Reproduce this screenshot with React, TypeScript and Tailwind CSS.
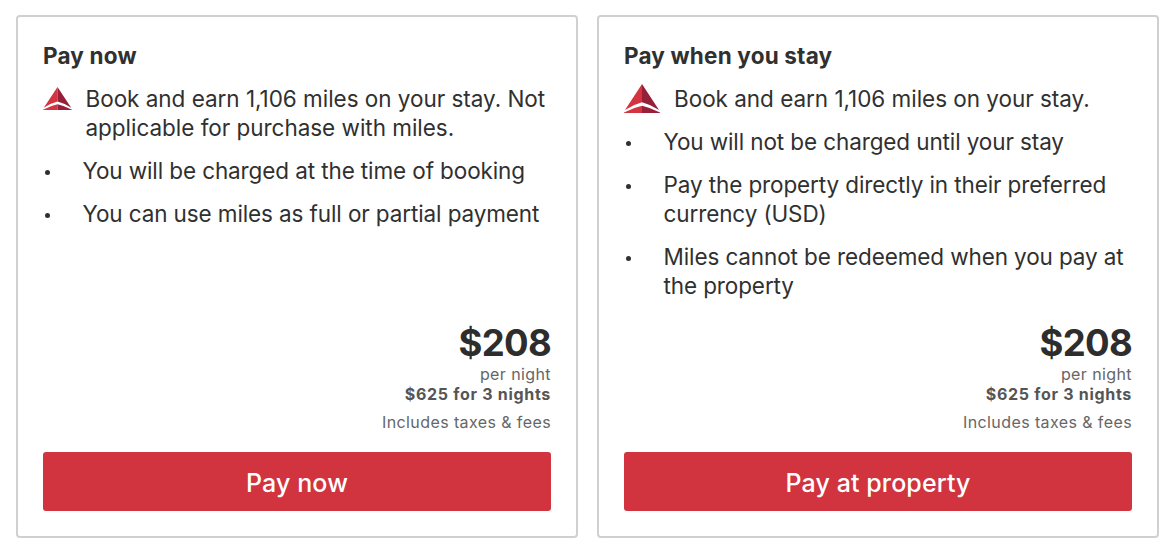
import clsx from 'clsx'

interface Offer {
  title: string
  miles: string[]
  largeLogo: boolean
  points: string[][]
  action: string
}

const offers: Offer[] = [
  {
    title: 'Pay now',
    miles: ['Book and earn 1,106 miles on your stay. Not', 'applicable for purchase with miles.'],
    largeLogo: false,
    points: [
      ['You will be charged at the time of booking'],
      ['You can use miles as full or partial payment'],
    ],
    action: 'Pay now',
  },
  {
    title: 'Pay when you stay',
    miles: ['Book and earn 1,106 miles on your stay.'],
    largeLogo: true,
    points: [
      ['You will not be charged until your stay'],
      ['Pay the property directly in their preferred', 'currency (USD)'],
      ['Miles cannot be redeemed when you pay at', 'the property'],
    ],
    action: 'Pay at property',
  },
]

function DeltaLogo({ className }: { className: string }) {
  return (
    <svg viewBox="0 0 36 30" preserveAspectRatio="none" className={className} aria-hidden="true">
      <path d="M18 0 L18 18.6 Q9 21 1 26.4 Z" fill="#d3343f" />
      <path d="M18 0 L35 26.4 Q27 21 18 18.6 Z" fill="#96203a" />
      <path d="M18 22 L18 30 L0 30 L0 29 Q9 24 18 22 Z" fill="#d3343f" />
      <path d="M18 22 Q27 24 36 29 L36 30 L18 30 Z" fill="#96203a" />
    </svg>
  )
}

function Lines({ lines }: { lines: string[] }) {
  return (
    <p className="whitespace-nowrap">
      {lines.map((line) => (
        <span key={line} className="block">
          {line}
        </span>
      ))}
    </p>
  )
}

function OfferCard({ offer }: { offer: Offer }) {
  return (
    <section className="flex h-[523px] w-[562px] flex-col rounded-[4px] border-2 border-[#d0d0d0] px-[25px] pt-[24px] pb-[25px]">
      <h2 className="text-[22.5px] leading-[29.3px] font-bold tracking-[0.18px]">{offer.title}</h2>

      <div className="mt-[14px] flex flex-col gap-[13.5px] text-[22.5px] leading-[29.3px] tracking-[-0.11px]">
        <div className="flex tracking-[-0.03px]">
          <div className={clsx('shrink-0', offer.largeLogo ? 'w-[50px]' : 'w-[42.5px]')}>
            <DeltaLogo
              className={offer.largeLogo ? 'block h-[29.5px] w-[36px]' : 'mt-[3px] block h-[23.5px] w-[29px]'}
            />
          </div>
          <Lines lines={offer.miles} />
        </div>
        {offer.points.map((point) => (
          <div key={point[0]} className="flex">
            <div className="w-[39.5px] shrink-0 pt-[14px] pl-[2px]">
              <div className="size-[5px] rounded-full bg-[#303030]" />
            </div>
            <Lines lines={point} />
          </div>
        ))}
      </div>

      <div className="mt-auto flex flex-col items-end text-[16px] leading-5 tracking-[0.4px] text-[#666]">
        <strong className="text-[36.5px] leading-[42px] font-bold tracking-[-0.7px] text-[#2d2d2d]">$208</strong>
        <span>per night</span>
        <strong className="font-bold tracking-[0.7px] text-[#555]">$625 for 3 nights</strong>
        <span className="mt-2">Includes taxes & fees</span>
      </div>

      <button className="mt-[20px] h-[59px] shrink-0 rounded-[3px] bg-[#d1343f] pt-[3px] text-[25px] leading-[30px] font-medium tracking-[0.1px] text-white">
        {offer.action}
      </button>
    </section>
  )
}

export default function App() {
  return (
    <main className="flex h-[545px] w-[1170px] gap-[19px] bg-white pt-[14.5px] pl-[16px] font-['Inter',sans-serif] text-[#303030]">
      {offers.map((offer) => (
        <OfferCard key={offer.title} offer={offer} />
      ))}
    </main>
  )
}
